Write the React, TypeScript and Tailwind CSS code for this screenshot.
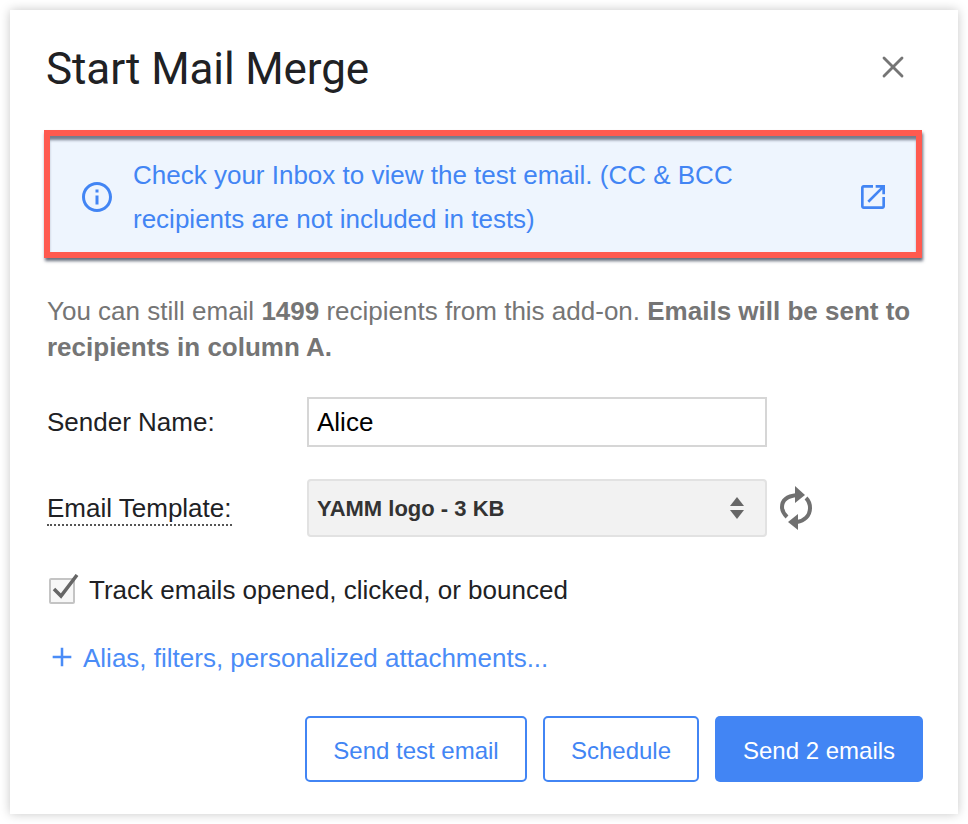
import { X } from "lucide-react";

const sans = "font-['Liberation_Sans',Arial,sans-serif]";

export default function App() {
  return (
    <div className={`min-h-[824px] w-[968px] bg-white p-[10px] ${sans}`}>
      <div className="h-[804px] w-[948px] bg-white pl-[34px] pr-[36px] shadow-[0_0_10px_rgba(0,0,0,0.22)]">
        {/* HEADER */}
        <div className="flex h-[120px] items-start justify-between">
          <h1 className="ml-[2px] mt-[31px] font-['Roboto',sans-serif] text-[44px] leading-[56px] tracking-[-0.1px] text-[#202124]">
            Start Mail Merge
          </h1>
          <X className="mr-[11px] mt-[39px] text-[#757575]" size={36} strokeWidth={1.9} />
        </div>

        {/* NOTICE */}
        <div className="flex h-[128px] w-[878px] items-center border-[6px] border-[#ff5a4f] bg-[#eef5fe] pl-[29px] pr-[27px] pt-[6px] text-[#4285f4] shadow-[1px_3px_3px_0_rgba(50,60,80,0.75),inset_0_5px_3px_-1px_rgba(50,60,80,0.65)]">
          <svg width="36" height="36" viewBox="0 0 24 24" fill="currentColor" className="shrink-0">
            <path d="M11 7h2v2h-2zm0 4h2v6h-2zm1-9C6.48 2 2 6.48 2 12s4.48 10 10 10 10-4.48 10-10S17.520 2 12 2zm0 18c-4.41 0-8-3.59-8-8s3.59-8 8-8 8 3.59 8 8-3.59 8-8 8z" />
          </svg>
          <p className="ml-[18px] w-[640px] text-[26px] leading-[44px]">
            Check your Inbox to view the test email. (CC &amp; BCC recipients
            are not included in tests)
          </p>
          <svg width="32" height="32" viewBox="0 0 24 24" fill="currentColor" className="ml-auto shrink-0">
            <path d="M19 19H5V5h7V3H5c-1.11 0-2 .9-2 2v14c0 1.1.89 2 2 2h14c1.1 0 2-.9 2-2v-7h-2v7zM14 3v2h3.59l-9.83 9.83 1.41 1.41L19 6.41V10h2V3h-7z" />
          </svg>
        </div>

        {/* INFO */}
        <p className="ml-[3px] mt-[35px] text-[26px] leading-[36px] text-[#757575]">
          You can still email <b>1499</b> recipients from this add-on.{" "}
          <b>Emails will be sent to recipients in column A.</b>
        </p>

        {/* FORM */}
        <div className="ml-[3px] mt-[32px] flex items-center">
          <label className="w-[260px] text-[26px] text-[#202124]">Sender Name:</label>
          <div className="flex h-[50px] w-[460px] items-center border-2 border-[#d6d6d6] pl-[8px] text-[26px] text-black">
            Alice
          </div>
        </div>

        <div className="ml-[3px] mt-[32px] flex items-center">
          <div className="w-[260px]">
            <span className="border-b-2 border-dotted border-[#555] pb-[1px] text-[26px] leading-[32px] text-[#202124]">
              Email Template:
            </span>
          </div>
          <div className="flex h-[58px] w-[460px] items-center justify-between rounded-[4px] border-2 border-[#e2e2e2] bg-[#f2f2f2] pl-[8px] pr-[21px] text-[22px] font-bold text-[#333]">
            YAMM logo - 3 KB
            <svg width="14" height="22" viewBox="0 0 14 22" fill="#666">
              <path d="M7 0 L14 9 H0 Z" />
              <path d="M7 22 L14 13 H0 Z" />
            </svg>
          </div>
          <svg className="ml-[12px]" width="36" height="44" viewBox="0 0 36 44">
            <g fill="none" stroke="#707070" strokeWidth="4">
              <path d="M18 9 C9 10 3 14 3 21 C3 25 5 28 8 31" />
              <path d="M27 12 C30 15 31 18 31 22 C31 30 25 35 18 36" />
            </g>
            <path d="M16 0 L26 9 L16 17 Z" fill="#707070" />
            <path d="M19 28 L9 36 L19 44 Z" fill="#707070" />
          </svg>
        </div>

        <div className="ml-[5px] mt-[34px] flex items-center">
          <span className="relative h-[26px] w-[26px] shrink-0 rounded-[2px] border-2 border-[#c4c4c4] bg-[#f7f7f7]">
            <svg className="absolute left-[0px] top-[-6px]" width="30" height="28" viewBox="0 0 30 28" fill="none">
              <path d="M3 15 L10 22 L26 1" stroke="#666" strokeWidth="3.500" />
            </svg>
          </span>
          <span className="ml-[14px] text-[26px] text-[#202124]">
            Track emails opened, clicked, or bounced
          </span>
        </div>

        <div className="ml-[5px] mt-[29px] flex items-center text-[26px] text-[#4a8cf7]">
          <svg width="32" height="32" viewBox="0 0 24 24" fill="none" stroke="currentColor" strokeWidth="1.900" className="ml-[-3px] mt-[-4px]">
            <path d="M5 12h14M12 5v14" />
          </svg>
          <span className="ml-[5px]">Alias, filters, personalized attachments...</span>
        </div>

        {/* ACTIONS */}
        <div className="mt-[38px] flex justify-end gap-[16px] text-[24px]">
          <button className="h-[66px] w-[222px] rounded-[5px] border-2 border-[#4285f4] pt-[3px] text-[#4285f4]">
            Send test email
          </button>
          <button className="h-[66px] w-[156px] rounded-[5px] border-2 border-[#4285f4] pt-[3px] text-[#4285f4]">
            Schedule
          </button>
          <button className="mr-[-1px] h-[66px] w-[208px] rounded-[5px] bg-[#4285f4] pt-[3px] text-white">
            Send 2 emails
          </button>
        </div>
      </div>
    </div>
  );
}
